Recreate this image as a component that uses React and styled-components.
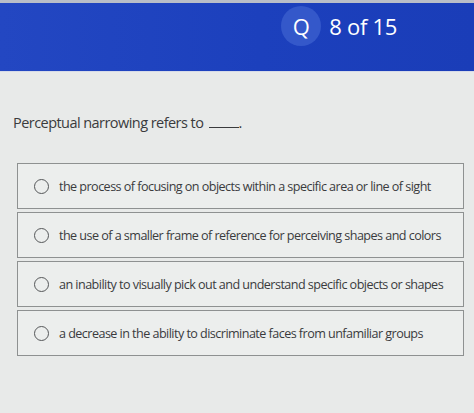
import React from 'react'
import styled, { createGlobalStyle } from 'styled-components'

const GlobalStyle = createGlobalStyle`
  html, body {
    margin: 0;
    padding: 0;
    background: #e8eae9;
    font-family: "Open Sans", "Noto Sans", sans-serif;
  }
`

const options = [
  'the process of focusing on objects within a specific area or line of sight',
  'the use of a smaller frame of reference for perceiving shapes and colors',
  'an inability to visually pick out and understand specific objects or shapes',
  'a decrease in the ability to discriminate faces from unfamiliar groups',
]

export default function App() {
  return (
    <Page>
      <GlobalStyle />
      <Header>
        <Counter>
          <SearchBadge>Q</SearchBadge>
          <CountText>8 of 15</CountText>
        </Counter>
      </Header>
      <Main>
        <Question>
          Perceptual narrowing refers to <Blank />.
        </Question>
        <OptionList>
          {options.map((text) => (
            <Option key={text}>
              <Radio />
              <OptionText>{text}</OptionText>
            </Option>
          ))}
        </OptionList>
      </Main>
    </Page>
  )
}

const Page = styled.div`
  width: 474px;
  height: 413px;
  overflow: hidden;
  background: #e8eae9;
`

const Header = styled.header`
  height: 68px;
  border-top: 3px solid #b9bec8;
  background: linear-gradient(90deg, #2347c2 0%, #1c40bd 55%, #1a3db8 100%);
  display: flex;
  align-items: flex-start;
  justify-content: flex-end;
  padding-right: 77px;
  border-bottom: 1px solid #d6dbe8;
`

const Counter = styled.div`
  display: flex;
  align-items: center;
  gap: 8px;
  margin-top: 3px;
`

const SearchBadge = styled.div`
  width: 40px;
  height: 40px;
  border-radius: 50%;
  background: #3458ca;
  color: #ffffff;
  font-size: 22px;
  display: flex;
  align-items: center;
  justify-content: center;
`

const CountText = styled.span`
  color: #ffffff;
  font-size: 22px;
  letter-spacing: -0.3px;
`

const Main = styled.main`
  padding: 41px 10px 0 13px;
`

const Question = styled.p`
  margin: 0;
  font-size: 14.5px;
  line-height: 20px;
  color: #3a3b3d;
  letter-spacing: -0.55px;
`

const Blank = styled.span`
  display: inline-block;
  width: 30px;
  border-bottom: 1px solid #3a3b3d;
  margin-left: 2px;
`

const OptionList = styled.div`
  display: flex;
  flex-direction: column;
  gap: 3px;
  margin: 30px 0 0 4px;
`

const Option = styled.label`
  height: 44px;
  border: 1px solid #8e9191;
  background: #eceeed;
  display: flex;
  align-items: center;
  padding-left: 16px;
  gap: 10px;
`

const Radio = styled.span`
  width: 13px;
  height: 13px;
  border-radius: 50%;
  border: 1.5px solid #555759;
  flex-shrink: 0;
`

const OptionText = styled.span`
  font-size: 12.6px;
  color: #3a3b3d;
  letter-spacing: -0.55px;
  white-space: nowrap;
`
